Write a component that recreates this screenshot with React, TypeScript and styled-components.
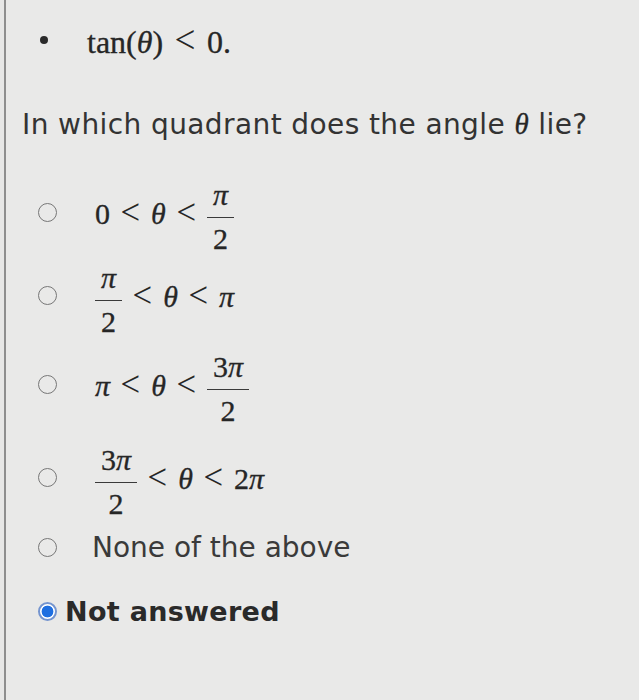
import React, { FC } from "react";
import styled, { createGlobalStyle } from "styled-components";

const GlobalStyle = createGlobalStyle`
  html, body {
    margin: 0;
    padding: 0;
    background: #e7e7e6;
  }
`;

const Page = styled.div`
  margin-left: 4px;
  min-height: 700px;
  border-left: 2px solid #8e8e8e;
  background: #e9e9e8;
  color: #2e2e2e;
  font-family: "DejaVu Sans", Verdana, sans-serif;
  box-sizing: border-box;
  padding-top: 20px;
  overflow: hidden;
`;

const BulletRow = styled.div`
  display: flex;
  align-items: center;
  height: 40px;
  padding-left: 34px;
`;

const Dot = styled.span`
  width: 8px;
  height: 8px;
  border-radius: 50%;
  background: #2a2a2a;
  margin-right: 39px;
`;

const Question = styled.p`
  margin: 44px 0 0 16px;
  height: 40px;
  line-height: 40px;
  font-size: 28px;
  letter-spacing: 0.4px;
  color: #333;
  white-space: nowrap;
`;

const Options = styled.div`
  display: flex;
  flex-direction: column;
  margin-top: 26px;
`;

const Row = styled.label<{ $h: number; $gap?: number }>`
  display: flex;
  align-items: center;
  height: ${(p) => p.$h}px;
  padding-left: 32px;
  gap: ${(p) => p.$gap ?? 38}px;
`;

const Radio = styled.span<{ $checked?: boolean }>`
  flex-shrink: 0;
  width: 19px;
  height: 19px;
  border-radius: 50%;
  box-sizing: border-box;
  border: ${(p) => (p.$checked ? "2px solid #7595cf" : "1.6px solid #777")};
  background: ${(p) =>
    p.$checked
      ? "radial-gradient(circle, #1f6fe0 0 5.6px, #fff 6.2px)"
      : "transparent"};
`;

const Math = styled.span<{ $size?: number }>`
  font-family: "Liberation Serif", "DejaVu Serif", serif;
  font-size: ${(p) => p.$size ?? 30}px;
  color: #262626;
  white-space: nowrap;
  -webkit-text-stroke: 0.3px #262626;
`;

const OptionMath = styled(Math)`
  margin-top: 10px;
`;

const V = styled.span`
  font-style: italic;
`;

const Rel = styled.span`
  display: inline-block;
  font-size: 1.22em;
  line-height: 1;
  margin: 0 0.28em;
  -webkit-text-stroke: 0;
  transform: scaleX(0.95);
`;

const Frac = styled.span`
  display: inline-flex;
  flex-direction: column;
  align-items: stretch;
  vertical-align: 0.62em;
  text-align: center;
  line-height: 1.02;
`;

const Num = styled.span`
  padding: 0 0.2em 0.2em;
  border-bottom: 1.5px solid #3a3a3a;
`;

const Den = styled.span`
  padding: 0.2em 0.2em 0;
`;

const Label = styled.span<{ $bold?: boolean }>`
  font-size: ${(p) => (p.$bold ? 27 : 28)}px;
  font-weight: ${(p) => (p.$bold ? 700 : 400)};
  color: ${(p) => (p.$bold ? "#2a2a2a" : "#3a3a3a")};
  letter-spacing: ${(p) => (p.$bold ? "0.3px" : "0")};
  white-space: nowrap;
`;

const Pi: FC<{ n?: string }> = ({ n }) => (
  <>
    {n}
    <V>π</V>
  </>
);

const Fr: FC<{ num: React.ReactNode; den: React.ReactNode }> = ({ num, den }) => (
  <Frac>
    <Num>{num}</Num>
    <Den>{den}</Den>
  </Frac>
);

const App: FC = () => {
  return (
    <>
      <GlobalStyle />
      <Page>
        <BulletRow>
          <Dot />
          <Math $size={32}>
            tan(<V>θ</V>)<Rel>&lt;</Rel>0.
          </Math>
        </BulletRow>

        <Question>
          In which quadrant does the angle <Math $size={29}><V>θ</V></Math> lie?
        </Question>

        <Options>
          <Row $h={84}>
            <Radio />
            <OptionMath>
              0<Rel>&lt;</Rel>
              <V>θ</V>
              <Rel>&lt;</Rel>
              <Fr num={<Pi />} den="2" />
            </OptionMath>
          </Row>
          <Row $h={82}>
            <Radio />
            <OptionMath>
              <Fr num={<Pi />} den="2" />
              <Rel>&lt;</Rel>
              <V>θ</V>
              <Rel>&lt;</Rel>
              <V>π</V>
            </OptionMath>
          </Row>
          <Row $h={96}>
            <Radio />
            <OptionMath>
              <V>π</V>
              <Rel>&lt;</Rel>
              <V>θ</V>
              <Rel>&lt;</Rel>
              <Fr num={<Pi n="3" />} den="2" />
            </OptionMath>
          </Row>
          <Row $h={90}>
            <Radio />
            <OptionMath>
              <Fr num={<Pi n="3" />} den="2" />
              <Rel>&lt;</Rel>
              <V>θ</V>
              <Rel>&lt;</Rel>
              <Pi n="2" />
            </OptionMath>
          </Row>
          <Row $h={50} $gap={35}>
            <Radio />
            <Label>None of the above</Label>
          </Row>
          <Row $h={78} $gap={8}>
            <Radio $checked />
            <Label $bold>Not answered</Label>
          </Row>
        </Options>
      </Page>
    </>
  );
};

export default App;
